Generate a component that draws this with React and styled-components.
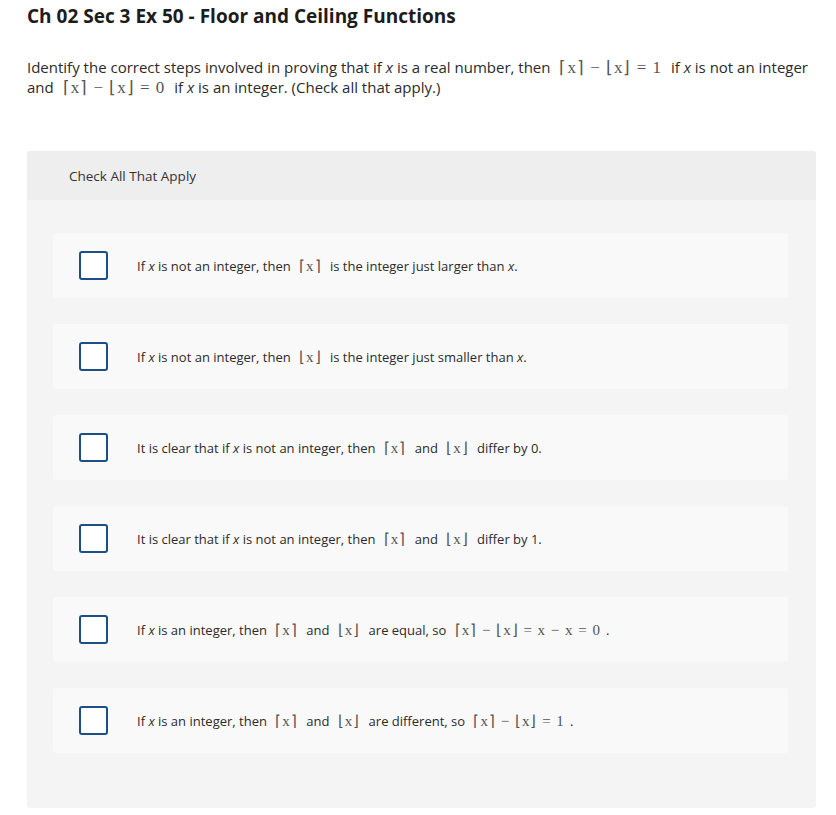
import React from 'react';
import styled, { createGlobalStyle } from 'styled-components';

const GlobalStyle = createGlobalStyle`
  body {
    margin: 0;
    background: #ffffff;
    font-family: "Open Sans", Lato, Arial, sans-serif;
    color: #222;
  }
`;

const Page = styled.div`
  padding: 5px 20px 7px 27px;
`;

const Title = styled.h1`
  margin: 0;
  font-size: 19px;
  font-weight: 700;
  line-height: 22px;
  color: #1c1c1c;
`;

const Prompt = styled.p`
  margin: 30px 0 0;
  font-size: 15px;
  line-height: 20px;
  color: #2b2b2b;
`;

const Var = styled.i`
  font-style: italic;
`;

const Math = styled.span`
  font-family: "Liberation Serif", "Times New Roman", serif;
  font-size: ${p => (p.$small ? '15px' : '17px')};
  line-height: 1;
  color: #555;
  margin: 0 5px;
  white-space: pre;
  letter-spacing: 1px;
`;

const Panel = styled.section`
  margin-top: 54px;
  background: #f4f4f4;
  border-radius: 3px;
  overflow: hidden;
`;

const PanelHeader = styled.div`
  height: 49px;
  display: flex;
  align-items: center;
  padding-left: 42px;
  background: #eeeeee;
  font-size: 13.5px;
  color: #333;
`;

const Options = styled.div`
  display: flex;
  flex-direction: column;
  gap: 26px;
  padding: 33px 28px 55px 26px;
`;

const Option = styled.label`
  height: 65px;
  display: flex;
  align-items: center;
  gap: 29px;
  padding-left: 26px;
  background: #f9f9f9;
  border-radius: 3px;
  font-size: 13px;
  color: #2b2b2b;
  cursor: pointer;
`;

const Box = styled.span`
  width: 25px;
  height: 25px;
  flex: none;
  border: 2px solid #1b4f86;
  border-radius: 3px;
  background: #fff;
`;

const Ceil = () => <Math $small>⌈x⌉</Math>;
const Floor = () => <Math $small>⌊x⌋</Math>;

const diff = rest => `⌈x⌉ − ⌊x⌋ = ${rest}`;

const options = [
  <>If <Var>x</Var> is not an integer, then <Ceil /> is the integer just larger than <Var>x</Var>.</>,
  <>If <Var>x</Var> is not an integer, then <Floor /> is the integer just smaller than <Var>x</Var>.</>,
  <>It is clear that if <Var>x</Var> is not an integer, then <Ceil /> and <Floor /> differ by 0.</>,
  <>It is clear that if <Var>x</Var> is not an integer, then <Ceil /> and <Floor /> differ by 1.</>,
  <>If <Var>x</Var> is an integer, then <Ceil /> and <Floor /> are equal, so <Math $small>{diff('x − x = 0')}</Math>.</>,
  <>If <Var>x</Var> is an integer, then <Ceil /> and <Floor /> are different, so <Math $small>{diff('1')}</Math>.</>,
];

export default function App() {
  return (
    <Page>
      <GlobalStyle />
      <Title>Ch 02 Sec 3 Ex 50 - Floor and Ceiling Functions</Title>
      <Prompt>
        Identify the correct steps involved in proving that if <Var>x</Var> is a real number, then{' '}
        <Math>{diff('1')}</Math> if <Var>x</Var> is not an integer and{' '}
        <Math>{diff('0')}</Math> if <Var>x</Var> is an integer. (Check all that apply.)
      </Prompt>
      <Panel>
        <PanelHeader>Check All That Apply</PanelHeader>
        <Options>
          {options.map((text, i) => (
            <Option key={i}>
              <Box />
              <span>{text}</span>
            </Option>
          ))}
        </Options>
      </Panel>
    </Page>
  );
}
